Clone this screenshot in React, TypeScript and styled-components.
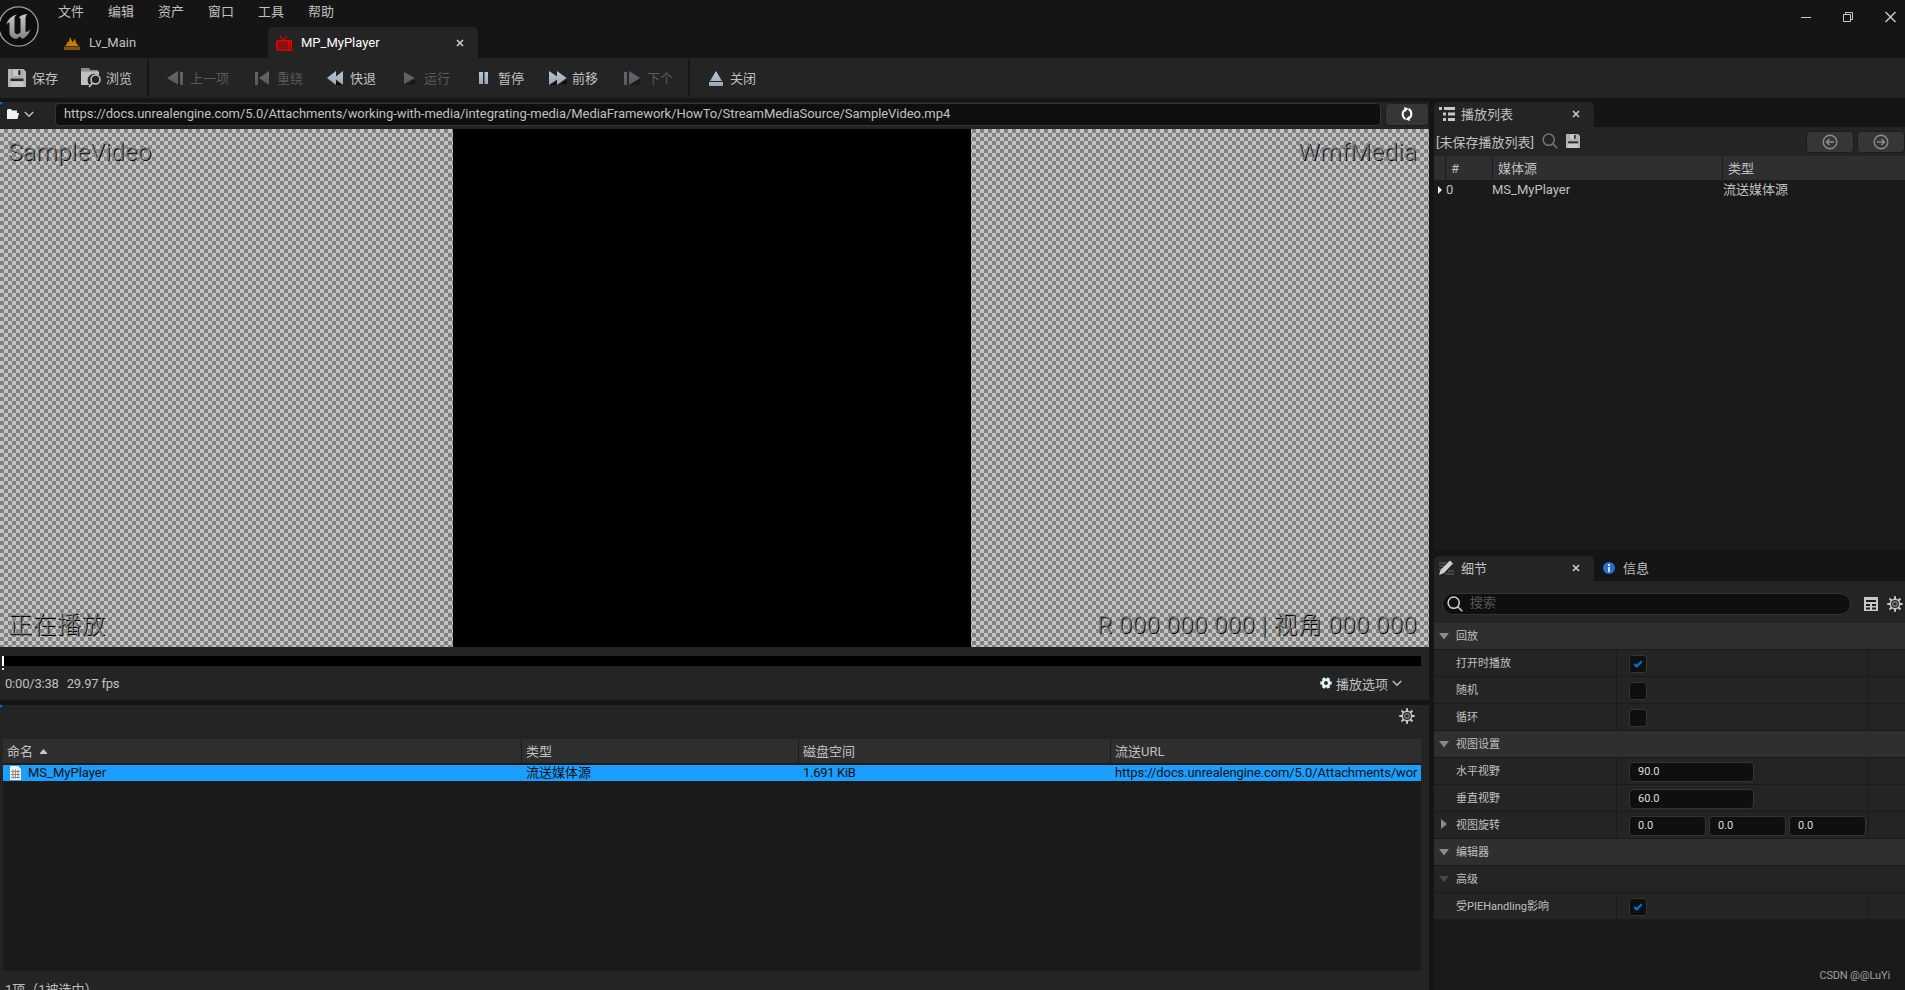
import React from 'react';
import styled, { createGlobalStyle } from 'styled-components';

const Global = createGlobalStyle`
  * { box-sizing: border-box; }
  body { margin: 0; background: #151515; overflow: hidden; font-family: Roboto, "Noto Sans CJK SC", sans-serif; font-size: 13px; color: #c0c0c0; }
`;
const Window = styled.div`width: 1905px; height: 990px; display: flex; flex-direction: column; overflow: hidden; background: #151515;`;
const TitleBar = styled.header`height: 58px; display: flex; flex: none;`;
const LogoBox = styled.div`width: 58px; padding-top: 6px; svg { display: block; }`;
const TitleMain = styled.div`flex: 1;`;
const Menu = styled.nav`height: 27px; display: flex; align-items: center; gap: 24px; padding-bottom: 4px; line-height: 20px;`;
const Tabs = styled.div`display: flex;`;
const DocTab = styled.div<{ $active?: boolean }>`
  height: 31px; width: 210px; display: flex; align-items: center; gap: 9px; padding: 0 14px 0 8px;
  background: ${p => (p.$active ? '#242424' : 'transparent')}; color: ${p => (p.$active ? '#fff' : '#c0c0c0')};
  border-radius: 5px 5px 0 0; svg:last-child { margin-left: auto; }
`;
const MapTab = styled(DocTab)`padding-left: 6px; svg:last-child { margin-left: 0; }`;
const WinButtons = styled.div`display: flex; gap: 31px; padding: 11px 9px 0 0;`;
const Toolbar = styled.div`height: 40px; flex: none; display: flex; align-items: center; background: #242424;`;
const ToolGroup = styled.div<{ $w: number; $indent: number }>`
  width: ${p => p.$w}px; height: 38px; display: flex; align-items: center; padding-left: ${p => p.$indent}px;
  border-right: 2px solid #171717; &:last-child { border: 0; }
`;
const Tool = styled.div<{ $w: number; $off?: boolean; $gap?: number }>`
  width: ${p => p.$w}px; display: flex; align-items: center; gap: ${p => p.$gap ?? 6}px; white-space: nowrap; padding-bottom: 2px;
  color: ${p => (p.$off ? '#5a5a5a' : '#c0c0c0')}; svg { flex: none; margin-top: 2px; opacity: ${p => (p.$off ? 0.42 : 1)}; }
`;
const Body = styled.div`flex: 1; min-height: 0; display: flex; gap: 5px; padding-top: 4px;`;
const Left = styled.div`width: 1429px; display: flex; flex-direction: column; gap: 5px;`;
const Panel = styled.section`background: #242424; display: flex; flex-direction: column;`;
const PlayerPanel = styled(Panel)`height: 598px; flex: none;`;
const Corner = styled.i`width: 0; height: 0; border-top: 3px solid #0070e0; border-right: 3px solid transparent; align-self: flex-start;`;
const PathBar = styled.div`height: 27px; flex: none; display: flex; align-items: center; padding-bottom: 3px;`;
const OpenMenu = styled.div`width: 52px; padding-left: 4px; display: flex; align-items: center; gap: 5px;`;
const UrlInput = styled.div`width: 1326px; height: 23px; border: 1px solid #343434; border-radius: 4px; background: #0f0f0f; padding-left: 8px; line-height: 19px; letter-spacing: -0.045px; margin-right: 4px;`;
const SmallButton = styled.div<{ $w: number; $h: number }>`width: ${p => p.$w}px; height: ${p => p.$h}px; border-radius: 4px; background: #363636; border: 1px solid #1b1b1b; display: flex; align-items: center; justify-content: center;`;
const Viewport = styled.div`
  height: 518px; flex: none; position: relative;
  background: repeating-conic-gradient(#808080 0 25%, #c3c3c3 0 50%) 0 0 / 8px 8px;
  display: flex; justify-content: center;
`;
const Frame = styled.div`width: 518px; margin-right: 5px; background: #000;`;
const Overlay = styled.div<{ $right?: boolean; $bottom?: boolean }>`
  position: absolute; ${p => (p.$right ? 'right: 12px' : 'left: 8px')}; ${p => (p.$bottom ? 'bottom: 8px' : 'top: 9px')};
  font-size: 24px; line-height: 28px; font-weight: 300; letter-spacing: 0.42px; color: #808080; text-shadow: 1px 1px 0 #000; white-space: nowrap;
`;
const Scrub = styled.div`height: 15px; flex: none; margin: 9px 8px 0 2px; display: flex; background: linear-gradient(#000 10px, transparent 10px);`;
const Thumb = styled.i`width: 2px; height: 14px; background: linear-gradient(#fff 10px, #242424 10px 12px, #ddd 12px);`;
const PlayInfo = styled.div`height: 28px; margin-top: -2px; display: flex; align-items: center; padding: 0 27px 0 5px; gap: 8px; letter-spacing: -0.2px;`;
const PlayOptions = styled.div`margin-left: auto; display: flex; align-items: center; gap: 4px; letter-spacing: 0;`;
const SourcePanel = styled(Panel)`flex: 1; overflow: hidden;`;
const SourceTools = styled.div`height: 34px; flex: none; display: flex; justify-content: space-between; padding-right: 14px; svg { margin-top: 3px; }`;
const Table = styled.div`height: 232px; flex: none; margin: 0 8px 0 3px; background: #1a1a1a;`;
const TRow = styled.div<{ $cols: string; $kind: 'head' | 'selected' | 'plain' }>`
  display: grid; grid-template-columns: ${p => p.$cols}; white-space: nowrap; overflow: hidden;
  ${p => p.$kind === 'head' && 'height: 24px; line-height: 23px; background: #2f2f2f;'}
  ${p => p.$kind === 'selected' && 'height: 16px; line-height: 16px; margin-top: 2px; background: #1a9fff; color: #111;'}
  ${p => p.$kind === 'plain' && 'height: 20px; line-height: 20px; color: #c0c0c0;'}
`;
const Cell = styled.div<{ $line?: boolean; $pad?: number }>`
  padding-left: ${p => p.$pad ?? 4}px; border-right: ${p => (p.$line ? '1px solid #1a1a1a' : '0')}; overflow: hidden;
  display: flex; align-items: center; gap: 7px; svg { flex: none; }
`;
const UrlCell = styled(Cell)`letter-spacing: -0.1px;`;
const SizeCell = styled(Cell)`letter-spacing: -0.3px;`;
const Status = styled.div`padding: 9px 0 0 5px; line-height: 20px; white-space: nowrap;`;
const Right = styled.div`width: 471px; display: flex; flex-direction: column;`;
const PanelTabs = styled.div<{ $top?: number }>`height: 25px; margin-top: ${p => p.$top ?? 0}px; flex: none; display: flex;`;
const PanelTab = styled.div<{ $active?: boolean }>`
  width: 160px; height: 100%; display: flex; align-items: center; gap: 6px; padding: 0 14px 3px 5px; border-radius: 5px 5px 0 0;
  background: ${p => (p.$active ? '#242424' : 'transparent')};
  svg { margin-top: 2px; }
`;
const TabClose = styled.span`margin-left: auto; display: flex;`;
const InfoTab = styled(PanelTab)`gap: 8px; padding-left: 9px;`;
const ListBar = styled.div`height: 29px; background: #242424; flex: none; display: flex; align-items: center; padding: 0 0 1px 2px; gap: 8px;`;
const NavButtons = styled.div`margin: 1px 0 0 auto; display: flex; gap: 3px;`;
const ListBody = styled.div`height: 394px; flex: none; background: #1a1a1a;`;
const SearchRow = styled.div`height: 42px; flex: none; background: #242424; display: flex; align-items: center; padding: 4px 0 0 8px;`;
const SearchBox = styled.div`width: 409px; height: 22px; border-radius: 11px; background: #0f0f0f; border: 1px solid #343434; display: flex; align-items: center; gap: 7px; padding: 0 0 2px 4px; color: #575757; line-height: 18px; margin-right: 13px; svg { margin-top: 2px; }`;
const Details = styled.div`flex: 1; background: #1a1a1a; display: flex; flex-direction: column; font-size: 11px;`;
const Category = styled.div<{ $dim?: boolean }>`height: 26px; margin-bottom: 1px; background: ${p => (p.$dim ? '#242424' : '#2f2f2f')}; display: flex; align-items: center; gap: 7px; padding: 0 0 2px 5px; svg { margin-top: 2px; opacity: ${p => (p.$dim ? 0.35 : 1)}; }`;
const Prop = styled.div`height: 26px; margin-bottom: 1px; display: grid; grid-template-columns: 182px 251px 1fr; gap: 1px;`;
const PropCell = styled.div<{ $value?: boolean }>`
  background: #242424; display: flex; align-items: center; gap: ${p => (p.$value ? 3 : 7)}px;
  padding: ${p => (p.$value ? '1px 0 0 12px' : '0 0 2px 5px')};
`;
const Indent = styled.i`width: 10px;`;
const Check = styled.div`width: 18px; height: 18px; border: 1px solid #343434; border-radius: 3px; background: #0f0f0f; display: flex; align-items: center; justify-content: center;`;
const NumInput = styled.div<{ $w: number }>`width: ${p => p.$w}px; height: 20px; border: 1px solid #343434; border-radius: 4px; background: #0f0f0f; color: #ddd; padding-left: 8px; line-height: 17px;`;
const Watermark = styled.div`margin: auto 15px 6px auto; font-size: 11px; line-height: 16px; color: #a0a0a0; letter-spacing: -0.15px;`;

const Close = () => (
  <svg width="8" height="8" viewBox="0 0 8 8"><path d="M1 1l6 6M7 1L1 7" stroke="#c8c8c8" strokeWidth="1.700" /></svg>
);
const Chevron = () => <svg width="10" height="7" viewBox="0 0 10 7"><path d="M.8 1l4.200 4.200L9.200 1" fill="none" stroke="#c0c0c0" strokeWidth="1.500" /></svg>;
const Tri = ({ right }: { right?: boolean }) => (
  <svg width="10" height="10" viewBox="0 0 10 10"><path d={right ? 'M2 0l6 5-6 5z' : 'M0 2h10L5 8.500z'} fill="#8a8a8a" /></svg>
);
const Floppy = ({ s }: { s: number }) => (
  <svg width={s} height={s} viewBox="0 0 18 18">
    <path d="M0 0h15.500L18 2.500V18H0z" fill="#b4b4b4" />
    <path d="M4.500 0h9.500v7.500H4.500z" fill="#cacaca" stroke="#8a8a8a" strokeWidth=".6" />
    <path d="M10.300 1.300h2.200v4.800h-2.200z" fill="#242424" />
    <path d="M2.500 9.500h13v2.800h-13z" fill="#2a2a2a" />
    <path d="M2.500 12.300h13V18h-13z" fill="#c8c8c8" />
  </svg>
);
const Search = ({ s, c }: { s: number; c: string }) => (
  <svg width={s} height={s} viewBox="0 0 16 16"><circle cx="6.700" cy="6.700" r="5.600" fill="none" stroke={c} strokeWidth="1.500" /><path d="M10.800 10.800L15.300 15.300" stroke={c} strokeWidth="1.500" /></svg>
);
const Gear = () => (
  <svg width="16" height="16" viewBox="0 0 16 16" stroke="#c8c8c8" fill="none">
    <circle cx="8" cy="8" r="4.700" strokeWidth="1.500" /><circle cx="8" cy="8" r="2.200" strokeWidth="1.400" stroke="#777" />
    {[0, 45, 90, 135, 180, 225, 270, 315].map(a => <path key={a} d="M8 3.200V.3" strokeWidth="2" transform={`rotate(${a} 8 8)`} />)}
  </svg>
);
const SmallGear = () => (
  <svg width="12" height="12" viewBox="0 0 12 12" stroke="#e4f2f4" fill="none">
    <circle cx="6" cy="6" r="3.200" strokeWidth="2.600" />
    {[30, 90, 150, 210, 270, 330].map(a => <path key={a} d="M6 2.500V.3" strokeWidth="3" transform={`rotate(${a} 6 6)`} />)}
  </svg>
);
const Media = ({ shadow, d, w = 18, h = 14 }: { shadow?: string; d: string; w?: number; h?: number }) => (
  <svg width={w} height={h} viewBox={`0 0 ${w} ${h}`}>
    <defs><linearGradient id="steel" x1="0" y1="0" x2="0" y2="1"><stop offset="0" stopColor="#b9c9cf" /><stop offset="1" stopColor="#9aa3b8" /></linearGradient></defs>
    {shadow && <path d={shadow} fill="#080808" />}<path d={d} fill="url(#steel)" />
  </svg>
);
const Arrow = ({ left }: { left?: boolean }) => (
  <svg width="16" height="16" viewBox="0 0 16 16" fill="none" stroke="#8c8c8c" strokeWidth="1.400">
    <circle cx="8" cy="8" r="6.800" /><path d={left ? 'M12 8H4.500M7.500 5l-3 3 3 3' : 'M4 8h7.500M8.500 5l3 3-3 3'} />
  </svg>
);
const CheckBox = ({ on }: { on?: boolean }) => (
  <Check>{on && <svg width="10" height="8" viewBox="0 0 10 8"><path d="M1.200 4l2.500 2.300L8.800 1.300" fill="none" stroke="#0070e0" strokeWidth="2.300" /></svg>}</Check>
);

const Row = ({ label, expand, children }: { label: string; expand?: boolean; children: React.ReactNode }) => (
  <Prop>
    <PropCell>{expand ? <Tri right /> : <Indent />}{label}</PropCell>
    <PropCell $value>{children}</PropCell>
    <PropCell />
  </Prop>
);

const sourceCols = '519px 277px 312px 1fr';

export default function App() {
  return (
    <Window>
      <Global />
      <TitleBar>
        <LogoBox>
          <svg width="40" height="42" viewBox="0 0 40 42">
            <defs><linearGradient id="logo" x1="0" y1="0" x2="0" y2="1"><stop offset="0" stopColor="#c8c8c8" /><stop offset="1" stopColor="#858585" /></linearGradient></defs>
            <circle cx="18.500" cy="20.500" r="19.600" fill="#0d0d0d" stroke="#a0a0a0" strokeWidth="1.300" />
            <path d="M6 19C8 13 12 9.500 17 8.500C15 10 14.500 11 14.500 13V24.500C14.500 27.500 16 28.500 18 28C19 27.700 20 27 20.500 26V13.500C20.500 12 19.500 11.500 18.500 12C20 9.500 23 8.500 27.500 8C26 9.500 25.500 10.500 25.500 12.500V25C26 27 28 26 30.500 23C29 28 26 31 22.500 33L20 30.500L16.500 33C12 32.500 9 29.500 9.500 25.500V17.500C9.500 15.500 7.500 16.500 6 19Z" fill="url(#logo)" />
          </svg>
        </LogoBox>
        <TitleMain>
          <Menu>{['文件', '编辑', '资产', '窗口', '工具', '帮助'].map(t => <span key={t}>{t}</span>)}</Menu>
          <Tabs>
            <MapTab>
              <svg width="16" height="14" viewBox="0 0 16 14"><path d="M0 10.500h16V14H0z" fill="#82530c" /><path d="M1.500 10L3.800 5.500L4.600 6.500L6 1L8.200 5.500L9 6L10.800 2.500L12 6.500L14.500 10z" fill="#c67d0c" /></svg>
              Lv_Main
            </MapTab>
            <DocTab $active>
              <svg width="16" height="16" viewBox="0 0 16 16"><path d="M4 .5l3 4.500M11 .5L8 5" fill="none" stroke="#e00000" strokeWidth="1.200" /><rect x=".7" y="5.700" width="12" height="9.400" rx="1" fill="#8a1010" stroke="#f00000" strokeWidth="1.300" /><path d="M12.700 5.700h2.700v9.400h-2.700zM12.700 8.800h2.700M12.700 12h2.700" fill="#5a0808" stroke="#f00000" strokeWidth="1.200" /></svg>
              MP_MyPlayer<Close />
            </DocTab>
          </Tabs>
        </TitleMain>
        <WinButtons>
          <svg width="11" height="12"><path d="M0 6.500h10" stroke="#c8c8c8" /></svg>
          <svg width="11" height="12" fill="none" stroke="#c8c8c8"><path d="M.5 3.500h7v7h-7zM2.500 3.500v-2h7v7h-2" /></svg>
          <svg width="11" height="12" viewBox="0 0 11 12"><path d="M.5 1l10 10M10.500 1L.5 11" stroke="#c8c8c8" strokeWidth="1.500" /></svg>
        </WinButtons>
      </TitleBar>
      <Toolbar>
        <ToolGroup $w={149} $indent={8}>
          <Tool $w={73}><Floppy s={18} />保存</Tool>
          <Tool $w={66} $gap={5}>
            <svg width="20" height="20" viewBox="0 0 20 20"><path d="M0 0h8l1.500 2H17V7.500a6 6 0 0 0-8.500 9.500H0z" fill="#8a8a8a" /><path d="M0 3.500h18V7.500a6 6 0 0 0-9.500 9.500H0z" fill="#c0c0c0" /><circle cx="14.500" cy="11.500" r="4.500" fill="none" stroke="#c8c8c8" strokeWidth="1.500" /><path d="M11.500 15L8 19" stroke="#c8c8c8" strokeWidth="1.800" /></svg>浏览
          </Tool>
        </ToolGroup>
        <ToolGroup $w={541} $indent={18}>
          <Tool $w={88} $off><Media shadow="M3 9L17 14H9z" d="M0 7L11 0V14zM13 1h3v13h-3z" w={17} />上一项</Tool>
          <Tool $w={72} $off $gap={7}><Media d="M0 1h3v13H0zM4 7L14 0V14z" w={15} />重绕</Tool>
          <Tool $w={77} $gap={5}><Media shadow="M3 9L18 14H9z" d="M0 7L9 0V5.500L16 0V14L9 8.500V14z" />快退</Tool>
          <Tool $w={75} $off $gap={8}><Media shadow="M1 14L11 8V13z" d="M0 1L11 7L0 13z" w={12} />运行</Tool>
          <Tool $w={70} $gap={10}><Media d="M0 1h4v12H0zM5.500 1h4v12h-4z" w={9} />暂停</Tool>
          <Tool $w={75} $gap={5}><Media shadow="M1 14L10 10V14L18 9V13z" d="M0 0L8 5.500V0L17.500 7L8 14V8.500L0 14z" />前移</Tool>
          <Tool $w={60} $off $gap={6}><Media shadow="M5 14L16 8V13z" d="M0 1h3v13H0zM5 0L16 7L5 14z" w={17} />下个</Tool>
        </ToolGroup>
        <ToolGroup $w={200} $indent={19}>
          <Tool $w={100} $gap={7}><Media d="M7 0L13 10H1zM0 11h14v4H0z" w={14} h={15} />关闭</Tool>
        </ToolGroup>
      </Toolbar>
      <Body>
        <Left>
          <PlayerPanel>
            <PathBar>
              <Corner />
              <OpenMenu><svg width="12" height="10" viewBox="0 0 12 10"><path d="M0 1l1-1h3l1 1.500h5V4h2l-1.500 6H0z" fill="#f2f2f2" /></svg><Chevron /></OpenMenu>
              <UrlInput>https://docs.unrealengine.com/5.0/Attachments/working-with-media/integrating-media/MediaFramework/HowTo/StreamMediaSource/SampleVideo.mp4</UrlInput>
              <SmallButton $w={44} $h={23}>
                <svg width="12" height="14" viewBox="0 0 12 14" fill="none" stroke="#fff" strokeWidth="2">
                  <path d="M4.500 12C.8 10 .8 4.500 4 2.800M7.500 2C11.200 4 11.200 9.500 8 11.200" /><path d="M3 0l4.500 1.500L4 5zM9 14l-4.500-1.500L8 9z" fill="#fff" stroke="none" />
                </svg>
              </SmallButton>
            </PathBar>
            <Viewport>
              <Frame />
              <Overlay>SampleVideo</Overlay><Overlay $right>WmfMedia</Overlay>
              <Overlay $bottom>正在播放</Overlay><Overlay $right $bottom>R 000 000 000 | 视角 000 000</Overlay>
            </Viewport>
            <Scrub><Thumb /></Scrub>
            <PlayInfo><span>0:00/3:38</span><span>29.97 fps</span><PlayOptions><SmallGear />播放选项<Chevron /></PlayOptions></PlayInfo>
          </PlayerPanel>
          <SourcePanel>
            <SourceTools><Corner /><Gear /></SourceTools>
            <Table>
              <TRow $cols={sourceCols} $kind="head">
                <Cell $line>命名<svg width="7" height="5" viewBox="0 0 7 5"><path d="M3.500 0L7 4v1H0V4z" fill="#c8c8c8" /></svg></Cell>
                <Cell $line>类型</Cell><Cell $line>磁盘空间</Cell><Cell>流送URL</Cell>
              </TRow>
              <TRow $cols={sourceCols} $kind="selected">
                <Cell $pad={7}><svg width="11" height="14" viewBox="0 0 11 14"><path d="M0 0h8l3 3v11H0z" fill="#f4f4f4" /><path d="M1 5.500h9M1 8.500h9M1 11.500h9M3 3.500v9M5.500 3.500v9M8 3.500v9" stroke="#8a8a8a" /></svg>MS_MyPlayer</Cell>
                <Cell>流送媒体源</Cell><SizeCell>1.691 KiB</SizeCell><UrlCell>https://docs.unrealengine.com/5.0/Attachments/wor</UrlCell>
              </TRow>
            </Table>
            <Status>1项（1被选中）</Status>
          </SourcePanel>
        </Left>
        <Right>
          <PanelTabs>
            <PanelTab $active>
              <svg width="16" height="14" fill="#c8c8c8"><path d="M0 0h3v3H0zM5 0h11v3H5zM4 5.500h3v3H4zM9 5.500h7v3H9zM4 11h3v3H4zM9 11h7v3H9z" /></svg>
              播放列表<TabClose><Close /></TabClose>
            </PanelTab>
          </PanelTabs>
          <ListBar>
            [未保存播放列表]<Search s={16} c="#777" /><Floppy s={14} />
            <NavButtons><SmallButton $w={48} $h={22}><Arrow left /></SmallButton><SmallButton $w={48} $h={22}><Arrow /></SmallButton></NavButtons>
          </ListBar>
          <ListBody>
            <TRow $cols="12px 47px 230px 1fr" $kind="head"><Cell $line $pad={0} /><Cell $line $pad={5}>#</Cell><Cell $line $pad={5}>媒体源</Cell><Cell $pad={5}>类型</Cell></TRow>
            <TRow $cols="12px 46px 231px 1fr" $kind="plain">
              <Cell $pad={4}><svg width="4" height="8"><path d="M0 0l4 4-4 4z" fill="#eee" /></svg></Cell>
              <Cell $pad={0}>0</Cell><Cell $pad={0}>MS_MyPlayer</Cell><Cell $pad={0}>流送媒体源</Cell>
            </TRow>
          </ListBody>
          <PanelTabs $top={6}>
            <PanelTab $active>
              <svg width="16" height="16" viewBox="0 0 16 16"><path d="M0 3h8M0 6h6M0 9h3M9 11h6M6 14h9" stroke="#666" /><path d="M0 15l1.500-5L11 .5l3 3L5 13z" fill="#d0d0d0" /></svg>
              细节<TabClose><Close /></TabClose>
            </PanelTab>
            <InfoTab>
              <svg width="12" height="12" viewBox="0 0 12 12"><circle cx="6" cy="6" r="6" fill="#2b6fd0" /><path d="M5 5h2v5H5zM5 2h2v2H5z" fill="#d8e4f4" /></svg>信息
            </InfoTab>
          </PanelTabs>
          <SearchRow>
            <SearchBox><Search s={16} c="#d0d0d0" />搜索</SearchBox>
            <svg width="14" height="14"><path d="M0 0h14v14H0z" fill="#c8c8c8" /><path d="M2 3h10v2H2zM2 7h4v2H2zM8 7h4v2H8zM2 10.500h4v2H2zM8 10.500h4v2H8z" fill="#1c1c1c" /></svg>
            <svg width="9" height="1" /><Gear />
          </SearchRow>
          <Details>
            <Category><Tri />回放</Category>
            <Row label="打开时播放"><CheckBox on /></Row>
            <Row label="随机"><CheckBox /></Row>
            <Row label="循环"><CheckBox /></Row>
            <Category><Tri />视图设置</Category>
            <Row label="水平视野"><NumInput $w={125}>90.0</NumInput></Row>
            <Row label="垂直视野"><NumInput $w={125}>60.0</NumInput></Row>
            <Row label="视图旋转" expand><NumInput $w={77}>0.0</NumInput><NumInput $w={77}>0.0</NumInput><NumInput $w={77}>0.0</NumInput></Row>
            <Category><Tri />编辑器</Category>
            <Category $dim><Tri />高级</Category>
            <Row label="受PIEHandling影响"><CheckBox on /></Row>
            <Watermark>CSDN @@LuYi</Watermark>
          </Details>
        </Right>
      </Body>
    </Window>
  );
}
